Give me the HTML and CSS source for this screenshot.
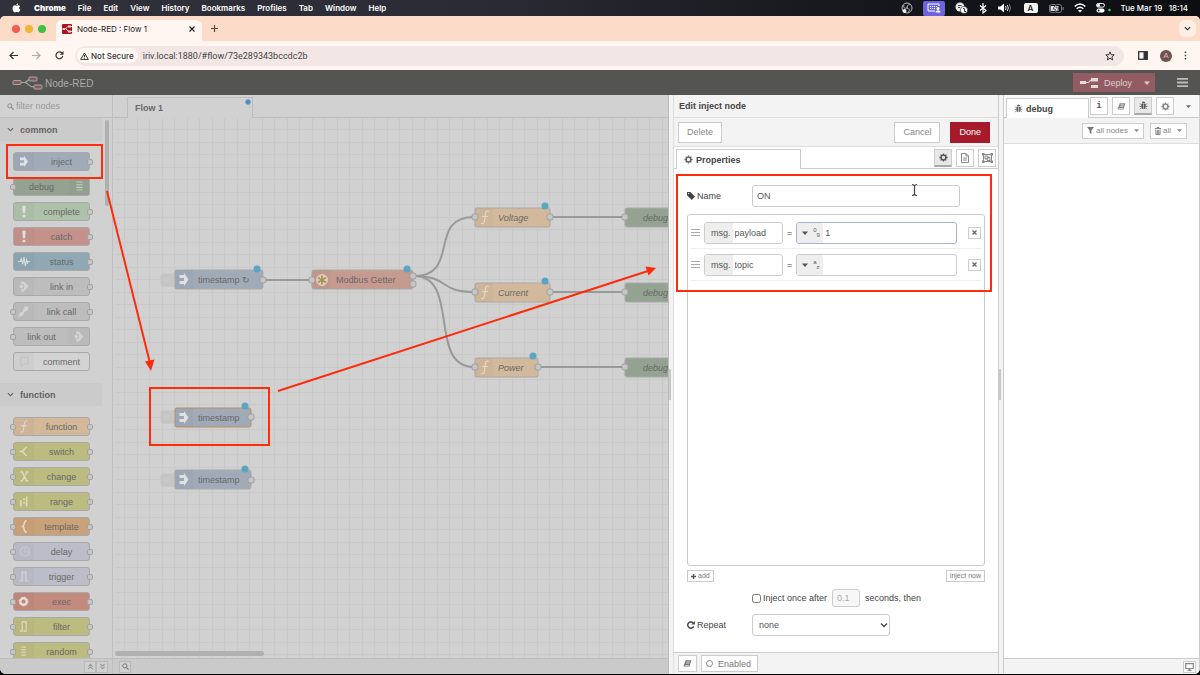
FILE: index.html
```html
<!DOCTYPE html>
<html lang="en">
<head>
<meta charset="utf-8">
<title>Node-RED : Flow 1</title>
<link rel="stylesheet" href="styles.css">
</head>
<body>
<svg class="defs" aria-hidden="true">
  <symbol id="i-gear" viewBox="0 0 16 16"><circle cx="8" cy="8" r="4.2" fill="none" stroke="currentColor" stroke-width="2.6"/><path d="M8 .8v3M8 12.200v3M.8 8h3M12.200 8h3M2.900 2.900l2.100 2.100M11 11l2.100 2.100M2.900 13.100L5 11M11 5l2.100-2.100" stroke="currentColor" stroke-width="2.400"/></symbol>
  <symbol id="i-bug" viewBox="0 0 16 16"><path d="M5 4a3 3 0 0 1 6 0zM4.500 5h3v9.500C5 14 4 12 4 9.500zM8.500 5h3l.5 4.500c0 2.500-1 4.500-3.500 5z" fill="currentColor"/><path d="M4.500 7L2 4.500M4 9.500H1M4.500 12L2 14.500M11.500 7L14 4.500M12 9.500h3M11.500 12l2.500 2.500" stroke="currentColor" stroke-width="1.500"/></symbol>
  <symbol id="i-book" viewBox="0 0 16 16"><path d="M5 2h10l-3.500 11.500H3c-2 0-2-1.500-1.500-3z" fill="currentColor"/><path d="M6.500 5h5.500M5.700 7.500h5.500M3 11.500h7.500" stroke="#fff" stroke-width="1.100"/></symbol>
  <symbol id="i-search" viewBox="0 0 16 16"><circle cx="6.500" cy="6.500" r="4.700" fill="none" stroke="currentColor" stroke-width="2.200"/><path d="M10 10l5 5" stroke="currentColor" stroke-width="2.600"/></symbol>
  <symbol id="i-caret" viewBox="0 0 8 8"><path d="M0 2h8L4 6.500z" fill="currentColor"/></symbol>
  <symbol id="i-chev" viewBox="0 0 8 8"><path d="M1 2.500l3 3 3-3" fill="none" stroke="currentColor" stroke-width="1.300"/></symbol>
  <symbol id="i-bars" viewBox="0 0 12 12"><path d="M0 2h12M0 6h12M0 10h12" stroke="currentColor" stroke-width="2"/></symbol>
  <symbol id="i-lines" viewBox="0 0 9 9"><path d="M0 1.500h9M0 4.500h9M0 7.500h9" stroke="currentColor"/></symbol>
  <symbol id="n-arrow" viewBox="0 0 20 19"><path d="M5.500 5H10V3l4.500 6.500L10 16v-2H5.500v-3H10V8H5.500z" fill="#dfe1e4"/></symbol>
  <symbol id="n-list" viewBox="0 0 20 19"><path d="M7 4.500h7M7 7.500h7M7 10.500h7M7 13.500h7" stroke="#c3ccc1" stroke-width="1.200"/></symbol>
  <symbol id="n-bang" viewBox="0 0 20 19"><path d="M8 3h4l-.8 8.500H8.800zM8.500 13h3v3h-3z" fill="#dedede"/></symbol>
  <symbol id="n-pulse" viewBox="0 0 20 19"><path d="M3.500 9.500H6l1-3 1.500 6L10 4.500l1.500 10 1.300-7 1.200 3.500.8-1.500h2" fill="none" stroke="#d3dce0" stroke-width="1.300"/></symbol>
  <symbol id="n-link" viewBox="0 0 20 19"><path d="M7 4h3l5 5.500-5 5.500H7v-3h3V7H7z" fill="#d3d3d3"/><circle cx="7" cy="9.500" r="2" fill="#d3d3d3"/></symbol>
  <symbol id="n-call" viewBox="0 0 20 19"><path d="M11 3.500l4 1-1 4-3 1-3 5-4 1 1-4.500 3-1z" fill="#d4d4d4"/></symbol>
  <symbol id="n-comment" viewBox="0 0 20 19"><path d="M6 5h9v7h-5l-3 3v-3H6z" fill="none" stroke="#c0c0c0"/></symbol>
  <symbol id="n-fn" viewBox="0 0 20 19"><path d="M14 3.500c-2.500-1-3.300 0-3.600 2.500L9.500 13c-.3 2.500-1.500 3.200-3.500 2.300M7 8.500h6" fill="none" stroke="#e2d7c9" stroke-width="1.200"/></symbol>
  <symbol id="n-switch" viewBox="0 0 20 19"><path d="M5 9.500h3l5-5M8 9.500l5 5" fill="none" stroke="#deddbb" stroke-width="1.600"/></symbol>
  <symbol id="n-change" viewBox="0 0 20 19"><path d="M6 4.500h2l5 10h2M6 14.500h2l2-4M11.500 8l1.500-3.500h2" fill="none" stroke="#deddbb" stroke-width="1.500"/></symbol>
  <symbol id="n-range" viewBox="0 0 20 19"><path d="M6.500 8v7M13 4v11M10 6v2m0 2v2" stroke="#deddbb" stroke-width="1.800"/></symbol>
  <symbol id="n-brace" viewBox="0 0 20 19"><path d="M13 3c-4 0-1.500 5-4.500 6.500C11.500 11 9 16 13 16" fill="none" stroke="#e6d6c5" stroke-width="1.800"/></symbol>
  <symbol id="n-clock" viewBox="0 0 20 19"><circle cx="11" cy="9.500" r="5" fill="none" stroke="#cbcbd4" stroke-width="1.300"/><path d="M11 6v4h3" fill="none" stroke="#cbcbd4"/></symbol>
  <symbol id="n-trigger" viewBox="0 0 20 19"><path d="M5 14.500h3v-10h4v10h3" fill="none" stroke="#d1d1d9" stroke-width="1.400"/></symbol>
  <symbol id="n-cog" viewBox="0 0 20 19"><circle cx="9.500" cy="9.500" r="3.600" fill="none" stroke="#e8dad6" stroke-width="2.600"/><circle cx="9.500" cy="9.500" r="5" fill="none" stroke="#e8dad6" stroke-dasharray="2 1.900"/></symbol>
  <symbol id="n-filter" viewBox="0 0 20 19"><path d="M5.500 14.500H8v-10h4.500v10h-3" fill="none" stroke="#dfd3b5" stroke-width="1.500"/></symbol>
  <symbol id="n-random" viewBox="0 0 20 19"><path d="M7 4.500h5M7 7.500h5M7 10.500h5M7 13.500h5" fill="none" stroke="#dccfae" stroke-width="1.600"/></symbol>
</svg>

<div class="screen">
<header class="menubar">
  <svg class="apple" viewBox="0 0 16 18"><path d="M11 .5c.2 2-1.500 3.600-3.200 3.500C7.600 2.300 9.300.6 11 .5zM8 5c.8 0 1.800-.9 3.400-.8 1.200.1 2.300.6 3 1.600-2.600 1.700-2.200 5 .5 6.100C14 14.500 12.600 17 11 17c-1.200 0-1.600-.7-3-.7s-1.900.7-3 .7C2.800 17 .5 12.500.8 9 1 6 2.900 4.300 5 4.200 6.300 4.200 7.300 5 8 5z" fill="#fff"/></svg>
  <nav class="menus"><b>Chrome</b><span>File</span><span>Edit</span><span>View</span><span>History</span><span>Bookmarks</span><span>Profiles</span><span>Tab</span><span>Window</span><span>Help</span></nav>
  <div class="status">
    <svg width="12" height="12" viewBox="0 0 12 12"><circle cx="6" cy="6" r="5" fill="none" stroke="#bbb"/><path d="M6 6c0-3 2-4 3-3M6 6c3 1 3 3 1 4M6 6C3 7 2 5 3 3" stroke="#bbb" fill="none"/><circle cx="3.500" cy="9" r="2" fill="#eee"/></svg>
    <span class="share"><svg width="14" height="10" viewBox="0 0 14 10"><path d="M12 3V1H1v7h7" fill="none" stroke="#fff"/><path d="M3 3.500h7M3 5.500h5" stroke="#fff" stroke-dasharray="1 1"/><circle cx="11" cy="5.500" r="1.500" fill="#fff"/><path d="M8.500 9.500c0-3 5-3 5 0z" fill="#fff"/></svg></span>
    <svg width="13" height="12" viewBox="0 0 13 12"><circle cx="5" cy="5" r="4.500" fill="#e8e8e8"/><circle cx="9" cy="8" r="3.600" fill="#fff" stroke="#222" stroke-width=".6"/><path d="M3 3.500h3.500M3 5.500h2M8 6.500h1.500v3h1.500" stroke="#444" fill="none"/></svg>
    <svg width="10" height="12" viewBox="0 0 10 12"><path d="M2 3.500l6 5L5 11V1M8 3.500l-6 5" fill="none" stroke="#fff" stroke-width="1.200"/></svg>
    <svg width="15" height="10" viewBox="0 0 15 10"><path d="M0 3.500h2.500L6 .5v9l-3.500-3H0z" fill="#fff"/><path d="M7.500 3q1.200 2 0 4M9.300 2q2 3 0 6" stroke="#ddd" fill="none"/><path d="M11.200 1q2.600 4 0 8" stroke="#777" fill="none"/></svg>
    <span class="lang">A</span>
    <svg width="15" height="9" viewBox="0 0 15 9"><rect x=".5" y=".5" width="12" height="8" rx="2" fill="none" stroke="#777"/><rect x="1.500" y="2" width="8" height="5" fill="#ddd"/><path d="M7 0L4 5h2.500L6 9l4-5H7z" fill="#fff" stroke="#222" stroke-width=".7"/><path d="M14 3v3" stroke="#888"/></svg>
    <svg width="12" height="10" viewBox="0 0 12 10"><path d="M.7 3.500q5.300-5 10.600 0M2.700 5.700q3.300-3 6.600 0" fill="none" stroke="#fff" stroke-width="1.500"/><path d="M4 7.500q2-1.600 4 0L6 9.500z" fill="#fff"/></svg>
    <svg width="15" height="10" viewBox="0 0 15 10"><rect x=".5" y=".5" width="8" height="3.600" rx="1.800" fill="none" stroke="#fff"/><circle cx="2.500" cy="2.300" r="1.500" fill="#fff"/><rect x=".5" y="5.500" width="8" height="4" rx="2" fill="#fff"/><circle cx="2.600" cy="7.500" r="1" fill="#222"/><circle cx="13.500" cy="7" r="1.300" fill="#3fcf4a"/></svg>
    <time>Tue Mar 19&nbsp;&nbsp; 18:14</time>
  </div>
</header>

<div class="window">
<div class="tabstrip">
  <div class="lights"><i class="red"></i><i class="yellow"></i><i class="green"></i></div>
  <div class="browser-tab">
    <svg width="10" height="10" viewBox="0 0 10 10"><rect width="10" height="10" rx="1" fill="#a8141f"/><path d="M0 5h2c3 0 2-2.500 5-2.500h3M3 4.500c2 0 2 3 4 3h3" fill="none" stroke="#f1d5d5"/><path d="M1 4h2v2H1zM6 1.500h3v2H6zM6 6.500h3v2H6z" fill="#f1d5d5"/></svg>
    <span class="tab-title">Node-RED : Flow 1</span>
    <button class="plain" aria-label="Close tab"><svg width="6" height="6" viewBox="0 0 6 6"><path d="M.5.5l5 5M5.500.5l-5 5" stroke="#222" stroke-width="1.200"/></svg></button>
  </div>
  <button class="plain newtab" aria-label="New tab"><svg width="7" height="7" viewBox="0 0 7 7"><path d="M3.500 0v7M0 3.500h7" stroke="#5b4a42" stroke-width="1.200"/></svg></button>
  <button class="plain tabsearch" aria-label="Search tabs"><svg width="7" height="7"><use href="#i-chev"/></svg></button>
</div>
<div class="addressbar">
  <button class="plain" aria-label="Back"><svg width="9" height="9" viewBox="0 0 9 9"><path d="M9 4.500H1M4.500 1L1 4.500 4.500 8" fill="none" stroke="#333" stroke-width="1.200"/></svg></button>
  <button class="plain" aria-label="Forward"><svg width="9" height="9" viewBox="0 0 9 9"><path d="M0 4.500h8M4.500 1L8 4.500 4.500 8" fill="none" stroke="#b3aaa7" stroke-width="1.200"/></svg></button>
  <button class="plain" aria-label="Reload"><svg width="9" height="9" viewBox="0 0 9 9"><path d="M7.700 5A3.400 3.400 0 1 1 7 2.200" fill="none" stroke="#333" stroke-width="1.200"/><path d="M8.500 0v3.700H4.800z" fill="#333"/></svg></button>
  <div class="omnibox">
    <span class="chip"><svg width="9" height="8" viewBox="0 0 9 8"><path d="M4.500 1L8.300 7.400H.7z" fill="none" stroke="#333"/><path d="M4.500 3v2M4.500 5.600v1" stroke="#333"/></svg>Not Secure</span>
    <input class="url" aria-label="Address" value="iriv.local:1880/#flow/73e289343bccdc2b">
    <svg width="10" height="10" viewBox="0 0 10 10"><path d="M5 .9l1.200 2.800 3 .2-2.300 2 .7 3L5 7.300 2.400 8.900l.7-3-2.300-2 3-.2z" fill="none" stroke="#333"/></svg>
  </div>
  <div class="browser-actions">
    <svg width="10" height="9" viewBox="0 0 10 9"><rect x=".7" y=".7" width="8.600" height="7.600" fill="none" stroke="#333" stroke-width="1.300"/><path d="M5.500 1h3.500v7H5.500z" fill="#333"/></svg>
    <span class="avatar">A</span>
    <svg width="3" height="9" viewBox="0 0 3 9"><path d="M.7.500h1.500v1.500H.7zM.7 3.800h1.500v1.500H.7zM.7 7h1.500v1.500H.7z" fill="#444"/></svg>
  </div>
</div>

<div class="appbar">
  <svg width="31" height="14" viewBox="0 0 31 14"><path d="M8 6.500h4c4 0 3-3.500 7-3.500M12 6.500c5 0 4 4.500 10 4.500" fill="none" stroke="#a7a7a7" stroke-width="1.200"/><g fill="#8a5a5a" stroke="#a7a7a7"><rect x="1" y="4.500" width="8" height="4" rx="1"/><rect x="17" y="1" width="8" height="4" rx="1"/><rect x="22" y="9" width="8" height="4" rx="1"/></g></svg>
  <span class="brand">Node-RED</span>
  <button class="deploy"><svg width="18" height="12" viewBox="0 0 18 12"><path d="M5 5.500h3c2 0 2-3 4-3" fill="none" stroke="#ddd" stroke-width="1.200"/><path d="M0 4h6v3H0zM11 1h7v3.500h-7zM11 8h7v3h-7z" fill="#e3dada"/></svg><span>Deploy</span><svg class="deploy-caret" width="6" height="6"><use href="#i-caret"/></svg></button>
  <button class="plain menu" aria-label="Menu"><svg width="11" height="11"><use href="#i-bars"/></svg></button>
</div>

<main class="main">
<aside class="palette">
  <label class="filter"><svg width="7" height="7"><use href="#i-search"/></svg><input placeholder="filter nodes" aria-label="Filter nodes"></label>
  <div class="palette-scroll">
    <div class="cats">
    <h3 class="cat"><svg width="7" height="7"><use href="#i-chev"/></svg>common</h3>
    <div class="nodes">
      <div class="node c-inject out"><svg><use href="#n-arrow"/></svg><span>inject</span></div>
      <div class="node c-debug in rev"><svg><use href="#n-list"/></svg><span>debug</span></div>
      <div class="node c-complete out"><svg><use href="#n-bang"/></svg><span>complete</span></div>
      <div class="node c-catch out"><svg><use href="#n-bang"/></svg><span>catch</span></div>
      <div class="node c-status out"><svg><use href="#n-pulse"/></svg><span>status</span></div>
      <div class="node c-link out"><svg><use href="#n-link"/></svg><span>link in</span></div>
      <div class="node c-link in out"><svg><use href="#n-call"/></svg><span>link call</span></div>
      <div class="node c-link in rev"><svg><use href="#n-link"/></svg><span>link out</span></div>
      <div class="node c-comment"><svg><use href="#n-comment"/></svg><span>comment</span></div>
    </div>
    <h3 class="cat"><svg width="7" height="7"><use href="#i-chev"/></svg>function</h3>
    <div class="nodes">
      <div class="node c-function in out"><svg><use href="#n-fn"/></svg><span>function</span></div>
      <div class="node c-olive in out"><svg><use href="#n-switch"/></svg><span>switch</span></div>
      <div class="node c-olive in out"><svg><use href="#n-change"/></svg><span>change</span></div>
      <div class="node c-olive in out"><svg><use href="#n-range"/></svg><span>range</span></div>
      <div class="node c-template in out"><svg><use href="#n-brace"/></svg><span>template</span></div>
      <div class="node c-delay in out"><svg><use href="#n-clock"/></svg><span>delay</span></div>
      <div class="node c-delay in out"><svg><use href="#n-trigger"/></svg><span>trigger</span></div>
      <div class="node c-exec in out"><svg><use href="#n-cog"/></svg><span>exec</span></div>
      <div class="node c-olive in out"><svg><use href="#n-filter"/></svg><span>filter</span></div>
      <div class="node c-olive in out"><svg><use href="#n-random"/></svg><span>random</span></div>
    </div>
    </div>
    <div class="vbar"></div>
  </div>
  <div class="dimfoot palette-foot">
    <button aria-label="Collapse all"><svg width="7" height="7" viewBox="0 0 8 8"><path d="M1.500 4L4 1.500 6.500 4M1.500 7L4 4.500 6.500 7" fill="none" stroke="#999" stroke-width="1.200"/></svg></button><button aria-label="Expand all"><svg width="7" height="7" viewBox="0 0 8 8"><path d="M1.500 1L4 3.500 6.500 1M1.500 4L4 6.500 6.500 4" fill="none" stroke="#999" stroke-width="1.200"/></svg></button>
  </div>
</aside>

<section class="editor">
  <div class="flowtabs"><div class="flowtab">Flow 1<i></i></div></div>
  <div class="canvas">
  <svg class="flow" aria-label="Flow 1">
    <defs>
      <pattern id="grid" width="25" height="25" patternUnits="userSpaceOnUse" x="124" y="129"><path d="M.5 0v25M13.500 0v25M0 .5h25M0 13.500h25" stroke="#c9c9c9" fill="none"/></pattern>
    </defs>
    <g transform="translate(-113 -118)">
      <rect x="115" y="118" width="1100" height="1000" fill="url(#grid)"/>
      <g class="wire"><path d="M263 280H312"/><path d="M414 276C461 276 427 217 474 217"/><path d="M414 276C450 276 438 292 474 292"/><path d="M414 276C461 276 427 367 474 367"/><path d="M550 217H625M550 292H625M538 367H625"/></g>
      <g class="gbtn"><rect x="161" y="274" width="14" height="12" rx="2"/><rect x="163" y="276" width="8" height="8" rx="1"/><rect x="161" y="411" width="14" height="12" rx="2"/><rect x="163" y="413" width="8" height="8" rx="1"/><rect x="161" y="474" width="14" height="12" rx="2"/><rect x="163" y="476" width="8" height="8" rx="1"/></g>
      <g class="gnode">
        <rect x="175" y="270" width="88" height="19" rx="2" fill="#a1abb8"/>
        <rect x="175" y="408" width="76" height="19" rx="2" fill="#a1abb8" class="selected"/>
        <rect x="175" y="470" width="76" height="19" rx="2" fill="#a1abb8"/>
        <rect x="312" y="270" width="101" height="19" rx="2" fill="#c79a90"/>
        <rect x="475" y="208" width="75" height="19" rx="2" fill="#d3b99b"/>
        <rect x="475" y="283" width="75" height="19" rx="2" fill="#d3b99b"/>
        <rect x="475" y="358" width="63" height="19" rx="2" fill="#d3b99b"/>
        <rect x="625" y="208" width="88" height="19" rx="2" fill="#94a391"/>
        <rect x="625" y="283" width="88" height="19" rx="2" fill="#94a391"/>
        <rect x="625" y="358" width="88" height="19" rx="2" fill="#94a391"/>
      </g>
      <g fill="#000" fill-opacity=".02"><rect x="175" y="270" width="18" height="19"/><rect x="175" y="408" width="18" height="19"/><rect x="175" y="470" width="18" height="19"/><rect x="312" y="270" width="19" height="19"/><rect x="475" y="208" width="18" height="19"/><rect x="475" y="283" width="18" height="19"/><rect x="475" y="358" width="18" height="19"/></g>
      <use href="#n-arrow" x="174" y="270" width="20" height="19"/><use href="#n-arrow" x="174" y="408" width="20" height="19"/><use href="#n-arrow" x="174" y="470" width="20" height="19"/>
      <use href="#n-fn" x="475" y="208" width="20" height="19"/><use href="#n-fn" x="475" y="283" width="20" height="19"/><use href="#n-fn" x="475" y="358" width="20" height="19"/>
      <circle cx="322" cy="280" r="5.500" fill="#d9ccb2" stroke="#dccfb4"/><path d="M322 275.500v9M318 277.700l8 4.600M326 277.700l-8 4.600" stroke="#a98a5e" stroke-width="1.500"/>
      <g class="port"><rect x="260" y="277" width="6" height="6" rx="2"/><rect x="309" y="277" width="6" height="6" rx="2"/><rect x="410" y="273" width="6" height="6" rx="2"/><rect x="410" y="281" width="6" height="6" rx="2"/><rect x="248" y="414" width="6" height="6" rx="2"/><rect x="248" y="477" width="6" height="6" rx="2"/><rect x="472" y="214" width="6" height="6" rx="2"/><rect x="547" y="214" width="6" height="6" rx="2"/><rect x="472" y="289" width="6" height="6" rx="2"/><rect x="547" y="289" width="6" height="6" rx="2"/><rect x="472" y="364" width="6" height="6" rx="2"/><rect x="535" y="364" width="6" height="6" rx="2"/><rect x="622" y="214" width="6" height="6" rx="2"/><rect x="622" y="289" width="6" height="6" rx="2"/><rect x="622" y="364" width="6" height="6" rx="2"/></g>
      <g fill="#5aa5c2"><circle cx="257" cy="269" r="3.500"/><circle cx="407" cy="269" r="3.500"/><circle cx="545" cy="206" r="3.500"/><circle cx="545" cy="281" r="3.500"/><circle cx="533" cy="356" r="3.500"/><circle cx="245" cy="406" r="3.500"/><circle cx="245" cy="469" r="3.500"/></g>
      <g class="glabel"><text x="198" y="283">timestamp ↻</text><text x="198" y="421">timestamp</text><text x="198" y="483">timestamp</text><text x="336" y="283">Modbus Getter</text><g font-style="italic"><text x="498" y="221">Voltage</text><text x="498" y="296">Current</text><text x="498" y="371">Power</text><text x="643" y="221">debug</text><text x="643" y="296">debug</text><text x="643" y="371">debug</text></g></g>
    </g>
  </svg>
  <div class="hbar"></div>
  </div>
  <div class="dimfoot editor-foot"><button aria-label="Search flows"><svg width="7" height="7"><use href="#i-search"/></svg></button></div>
</section>

<div class="grip tray-grip"><i></i></div>
<section class="tray">
  <h2 class="tray-title">Edit inject node</h2>
  <div class="tray-actions"><button class="btn">Delete</button><button class="btn push">Cancel</button><button class="btn primary">Done</button></div>
  <div class="tabs tray-tabs">
    <button class="tab"><svg width="9" height="9"><use href="#i-gear"/></svg>Properties</button>
    <div class="tab-tools">
      <button class="sq active" aria-label="Properties"><svg width="9" height="9"><use href="#i-gear"/></svg></button>
      <button class="sq" aria-label="Description"><svg width="8" height="10" viewBox="0 0 8 10"><path d="M.5.5h4.500l2.500 2.500v6.500h-7zM5 .5V3h2.500M2 5h4M2 7h4" fill="none" stroke="currentColor"/></svg></button>
      <button class="sq" aria-label="Appearance"><svg width="11" height="10" viewBox="0 0 11 10"><path d="M1.500 1.500h8v7h-8z M3 3h3v3H3z M5 4.500h3v3H5z" fill="none" stroke="currentColor"/><path d="M0 0h2.500v2.500H0zM8.500 0H11v2.500H8.500zM0 7.500h2.500V10H0zM8.500 7.500H11V10H8.500z" fill="currentColor"/></svg></button>
    </div>
  </div>
  <form class="form">
    <div class="row">
      <label class="lbl" for="name"><svg width="8" height="8" viewBox="0 0 8 8"><path d="M0 0h3.300L8 4.500 4.800 8 0 3.300z" fill="#444"/><circle cx="1.600" cy="1.600" r=".7" fill="#fff"/></svg>Name</label>
      <input id="name" class="field grow" value="ON">
    </div>
    <div class="props">
      <div class="prop">
        <svg class="drag" width="9" height="9"><use href="#i-lines"/></svg>
        <label class="field typed key"><span class="type">msg.</span><input aria-label="Property" value="payload"></label><span>=</span>
        <label class="field typed val focus"><span class="type"><svg width="6" height="6"><use href="#i-caret"/></svg><small><sup>0</sup><sub>9</sub></small></span><input aria-label="Payload value" value="1"></label>
        <button type="button" class="remove" aria-label="Remove payload"><svg width="5" height="5" viewBox="0 0 5 5"><path d="M.5.5l4 4M4.500.5l-4 4" stroke="#666" stroke-width="1.300"/></svg></button>
      </div>
      <div class="prop">
        <svg class="drag" width="9" height="9"><use href="#i-lines"/></svg>
        <label class="field typed key"><span class="type">msg.</span><input aria-label="Property" value="topic"></label><span>=</span>
        <label class="field typed val"><span class="type"><svg width="6" height="6"><use href="#i-caret"/></svg><small><sup>a</sup><sub>z</sub></small></span><input aria-label="Topic value" value=""></label>
        <button type="button" class="remove" aria-label="Remove topic"><svg width="5" height="5" viewBox="0 0 5 5"><path d="M.5.5l4 4M4.500.5l-4 4" stroke="#666" stroke-width="1.300"/></svg></button>
      </div>
    </div>
    <div class="under"><button type="button" class="mini"><svg width="5" height="5" viewBox="0 0 5 5"><path d="M2.500 0v5M0 2.500h5" stroke="#555" stroke-width="1.400"/></svg>add</button><button type="button" class="mini">inject now</button></div>
    <div class="row once"><input type="checkbox" id="once"><label for="once">Inject once after</label><input class="field delay" aria-label="Delay in seconds" value="0.1" disabled><span>seconds, then</span></div>
    <div class="row repeat">
      <label class="lbl" for="repeat"><svg width="8" height="8" viewBox="0 0 9 9"><path d="M7.500 6A3.500 3.500 0 1 1 7 2.300" fill="none" stroke="#444" stroke-width="1.600"/><path d="M8.800 0v4H4.800z" fill="#444"/></svg>Repeat</label>
      <div class="select"><select id="repeat" class="field"><option>none</option></select><svg width="8" height="8"><use href="#i-chev"/></svg></div>
    </div>
  </form>
  <div class="tray-foot"><button class="btn small" aria-label="Help"><svg width="9" height="9"><use href="#i-book"/></svg></button><button class="btn small enabled"><i></i>Enabled</button></div>
</section>

<div class="grip side-grip"><i></i></div>
<aside class="sidebar">
  <div class="tabs side-tabs">
    <button class="tab"><svg width="9" height="9"><use href="#i-bug"/></svg>debug</button>
    <div class="tab-tools">
      <button class="sq info" aria-label="Information">i</button>
      <button class="sq" aria-label="Help"><svg width="9" height="9"><use href="#i-book"/></svg></button>
      <button class="sq active" aria-label="Debug"><svg width="9" height="9"><use href="#i-bug"/></svg></button>
      <button class="sq" aria-label="Configuration"><svg width="9" height="9"><use href="#i-gear"/></svg></button>
      <button class="plain more" aria-label="More"><svg width="5" height="5"><use href="#i-caret"/></svg></button>
    </div>
  </div>
  <div class="side-tools">
    <button class="btn tiny"><svg width="7" height="7" viewBox="0 0 8 8"><path d="M0 0h8L5 4v4L3 6.500V4z" fill="#777"/></svg>all nodes<svg class="tc" width="5" height="5"><use href="#i-caret"/></svg></button>
    <button class="btn tiny"><svg width="6" height="8" viewBox="0 0 6 8"><path d="M0 1.500h6M2 1V.5h2V1M.9 2.500v5h4.200v-5M2.300 3v4M3.700 3v4" fill="none" stroke="#777" stroke-width=".9"/></svg>all<svg class="tc" width="5" height="5"><use href="#i-caret"/></svg></button>
  </div>
  <div class="messages"></div>
  <div class="side-foot"><button class="mini" aria-label="Open in window"><svg width="9" height="8" viewBox="0 0 9 8"><path d="M.7.700h7.600v4.800H.7z" fill="none" stroke="#888" stroke-width="1.200"/><path d="M3.500 6h2v1h1v1h-4V7h1z" fill="#888"/></svg></button></div>
</aside>
</main>
</div>
</div>

<svg class="marks" aria-hidden="true">
  <g fill="none" stroke="#fc2c0c" stroke-width="2"><rect x="7" y="145" width="95" height="33"/><rect x="150" y="388" width="119" height="57"/><rect x="677" y="175" width="314" height="116"/><path d="M107 191L150 363M278 391L648 271"/></g>
  <path d="M151 371l-6-9.500 9.500-2zM656 268l-7.500 7.500-3-9z" fill="#fc2c0c"/>
  <path d="M912 184.500q2 0 2.500 1.500q.5-1.500 2.500-1.500M914.500 186v8M912 195.500q2 0 2.500-1.500q.5 1.500 2.500 1.500" fill="none" stroke="#444" stroke-width="1.200"/>
</svg>
</body>
</html>
```

FILE: styles.css
```css
*, *::before, *::after { box-sizing: border-box; }
body { margin: 0; background: #000; font: 9px/12px "Liberation Sans", Arial, sans-serif; color: #555; }
button, input, select { font: inherit; color: inherit; margin: 0; }
button { display: flex; align-items: center; justify-content: center; cursor: pointer; }
input { min-width: 0; }
svg { flex: none; }
.defs { display: none; }
.plain { border: 0; background: none; padding: 0; }
.marks { position: absolute; left: 0; top: 0; width: 100%; height: 100%; pointer-events: none; }

.screen { display: flex; flex-direction: column; height: 100vh; background: linear-gradient(90deg, #30313b 0, #2a2b34 40%, #17181d 70%, #0d0e11 100%) top / 100% 24px no-repeat #000; }

/* system menu bar */
.menubar { display: flex; align-items: center; height: 16px; padding: 0 12px; color: #fff; font: 600 8px/14px Inter, sans-serif; }
.apple { width: 9px; height: 10px; }
.menus { display: flex; gap: 12px; margin-left: 13px; }
.status { display: flex; align-items: center; gap: 10px; margin-left: auto; }
.status time { font-weight: 500; }
.share { display: flex; align-items: center; justify-content: center; width: 22px; height: 15px; background: #6c63e0; border-radius: 2px; }
.lang { width: 14px; margin: 0 1px; border-radius: 2px; background: #f2f2f2; color: #222; text-align: center; font-size: 8px; line-height: 10px; }

/* browser chrome */
.window { display: flex; flex-direction: column; flex: 1; min-height: 0; margin-bottom: 1px; border-radius: 5px 5px 6px 6px; overflow: hidden; background: #fcdcc8; }
.tabstrip { display: flex; align-items: stretch; height: 25px; padding-right: 4px; background: #fcdcc8; font: 8px/12px Inter, sans-serif; color: #222; }
.lights { display: flex; align-items: center; gap: 5px; padding: 0 12px; }
.lights i { width: 8px; height: 8px; border-radius: 50%; }
.red { background: #f75c50; }
.yellow { background: #f2b535; }
.green { background: #3ec142; }
.browser-tab { display: flex; align-items: center; gap: 5px; width: 146px; margin: 4px 0 0 -2px; padding: 0 7px 4px 6px; border-radius: 6px 6px 0 0; background: #fff5f1; }
.tab-title { flex: 1; }
.newtab { margin-left: 9px; }
.tabsearch { align-self: center; width: 17px; height: 17px; margin-left: auto; border-radius: 6px; background: #fdeee6; }
.addressbar { display: flex; align-items: center; gap: 14px; height: 29px; padding: 0 13px 0 9px; background: #fff5f1; }
.omnibox { display: flex; align-items: center; flex: 1; gap: 5px; height: 20px; margin-left: -3px; padding: 0 9px 0 2px; border-radius: 10px; background: #f3e7e5; }
.chip { display: flex; align-items: center; gap: 2px; height: 15px; padding: 0 4px 0 3px; border-radius: 8px; background: #fff8f5; color: #333; font: 500 8px/12px Inter, sans-serif; }
.url { flex: 1; border: 0; padding: 0; background: none; color: #444; font: 9px/12px Roboto, sans-serif; }
.browser-actions { display: flex; align-items: center; gap: 12px; }
.avatar { width: 12px; height: 12px; border-radius: 50%; background: #6d5350; color: #e9b9b0; text-align: center; font-size: 8px; }

/* editor header */
.appbar { display: flex; align-items: center; height: 25px; padding: 0 12px; background: #545452; color: #aaa; }
.brand { margin: 3px auto 0 2px; font-size: 10px; }
.deploy { height: 19px; padding: 0 5px 0 7px; gap: 6px; border: 0; background: #925c62; color: #ddcdcd; }
.deploy-caret { margin-left: 6px; }
.menu { margin-left: 22px; color: #bbb; }

.main { display: flex; flex: 1; min-height: 0; }

/* palette */
.palette { display: flex; flex-direction: column; width: 113px; background: #d1d1d1; border-right: 1px solid #bfbfbf; }
.filter { display: flex; align-items: center; gap: 2px; height: 23px; padding: 0 7px; border-bottom: 1px solid #bdbdbd; background: #d2d2d2; color: #888; }
.filter input { flex: 1; border: 0; padding: 0; background: none; }
.filter input::placeholder { color: #999; }
.palette-scroll { display: flex; flex: 1; min-height: 0; overflow: hidden; }
.cats { flex: 1; }
.vbar { width: 4px; height: 86px; margin: 2px 3px; border-radius: 2px; background: #b0b0b0; }
.cat { display: flex; align-items: center; gap: 6px; height: 23px; margin: 0; padding-left: 7px; background: #cbcbcb; color: #636363; font-size: 9px; }
.nodes { display: flex; flex-direction: column; gap: 6px; padding: 11px 12px 12px 13px; }
.node { position: relative; display: flex; align-items: center; height: 19px; border: 1px solid #a9a9a9; border-radius: 3px; color: #686868; }
.node svg { width: 20px; height: 17px; background: #00000005; }
.node span { flex: 1; text-align: center; }
.rev { flex-direction: row-reverse; }
.in::before, .out::after { content: ""; position: absolute; top: 6px; width: 6px; height: 6px; border: 1px solid #a3a3a3; border-radius: 2px; background: #c6c6c6; }
.in::before { left: -4px; }
.out::after { right: -4px; }
.c-inject { background: #a1abb8; }
.c-debug { background: #94a391; }
.c-complete { background: #aec2a9; }
.c-catch { background: #c4928a; }
.c-status { background: #8fa8b3; }
.c-link { background: #bdbdbd; }
.c-comment { background: #d3d3d3; }
.c-function { background: #d3b899; }
.c-olive { background: #bcbb80; }
.c-template { background: #caa27a; }
.c-delay { background: #bdbdca; }
.c-exec { background: #c38a7e; }
.dimfoot { display: flex; align-items: center; height: 16px; border-top: 1px solid #bdbdbd; background: #cacaca; }
.dimfoot button { width: 12px; height: 12px; padding: 0; border: 1px solid #b9b9b9; background: #d0d0d0; color: #777; }
.palette-foot { justify-content: flex-end; padding-right: 4px; }
.editor-foot { padding-left: 6px; }

/* flow editor */
.editor { display: flex; flex-direction: column; flex: 1; min-width: 0; background: #d1d1d1; }
.flowtabs { display: flex; align-items: flex-end; height: 23px; padding-left: 14px; border-bottom: 1px solid #bdbdbd; }
.flowtab { position: relative; width: 126px; height: 21px; margin-bottom: -1px; padding: 4px 7px; border: 1px solid #bdbdbd; border-bottom: 0; background: #d1d1d1; color: #6a6a6a; font-weight: bold; }
.flowtab i { position: absolute; top: 1px; right: 1px; width: 6px; height: 6px; border-radius: 50%; border: 1px solid #8aa8c8; background: #4a86c4; }
.canvas { position: relative; flex: 1; min-height: 0; overflow: hidden; }
.flow { display: block; width: 100%; height: 100%; }
.hbar { position: absolute; left: 2px; bottom: 2px; width: 149px; height: 5px; border-radius: 3px; background: #b1b1b1; }
.wire { fill: none; stroke: #999; stroke-width: 2; }
.gnode rect { stroke: #a9a9a9; }
.gnode .selected { stroke: #b98d68; }
.gbtn rect { fill: #c8c8c8; stroke: #c0c0c0; }
.port rect { fill: #c6c6c6; stroke: #9f9f9f; }
.glabel { fill: #686868; font-size: 9px; }

/* split handles */
.grip { display: flex; align-items: center; background: #f3f3f3; }
.grip i { width: 2px; height: 31px; background: #c8c8c8; }
.tray-grip { width: 6px; border-left: 1px solid #bbb; border-right: 1px solid #ddd; }
.side-grip { width: 5px; border-left: 1px solid #ccc; }

/* shared controls */
.btn { height: 21px; padding: 0 8px; border: 1px solid #ccc; background: #fff; color: #888; }
.primary { border-color: #a71a2b; background: #a71a2b; color: #fff; }
.small { height: 17px; padding: 0 4px; gap: 5px; color: #777; }
.tiny { height: 16px; padding: 0 4px; gap: 2px; color: #888; font-size: 8px; }
.tc { margin-left: 4px; }
.mini { height: 12px; padding: 0 3px; gap: 2px; border: 1px solid #ccc; background: #fff; color: #777; font-size: 7px; }
.tabs { display: flex; align-items: flex-end; border-bottom: 1px solid #ccc; }
.tab { gap: 3px; height: 20px; margin-bottom: -1px; padding: 0 7px; justify-content: flex-start; border: 1px solid #ccc; border-bottom: 0; background: #fff; color: #444; font-weight: bold; }
.tab svg { color: #666; }
.tab-tools { display: flex; align-items: center; align-self: center; gap: 4px; margin-left: auto; }
.sq { width: 18px; height: 18px; padding: 0; border: 1px solid #ccc; background: #fff; color: #888; }
.sq.active { background: #e8e8e8; border-bottom: 2px solid #aaa; color: #555; }
.info { font: bold 9px/12px "Liberation Mono", monospace; color: #555; }
.field { height: 22px; padding: 0 4px; border: 1px solid #ccc; border-radius: 3px; background: #fff; color: #555; }

/* edit tray */
.tray { display: flex; flex-direction: column; width: 27%; background: #fff; }
.tray-title { height: 23px; margin: 0; padding: 5px; border-bottom: 1px solid #ddd; background: #f3f3f3; color: #444; font-size: 9px; }
.tray-actions { display: flex; align-items: center; gap: 10px; height: 29px; padding: 0 8px 0 4px; border-bottom: 1px solid #ddd; background: #f3f3f3; }
.push { margin-left: auto; }
.tray-tabs { height: 22px; padding: 0 2px; }
.tray-tabs .tab { width: 125px; }
.form { display: flex; flex-direction: column; flex: 1; min-height: 0; padding: 16px 13px 16px; color: #444; }
.row { display: flex; align-items: center; }
.lbl { display: flex; align-items: center; gap: 2px; width: 65px; }
.grow { flex: 1; margin-right: 25px; }
.props { flex: 1; margin-top: 7px; padding: 2px 3px; border: 1px solid #ccc; border-radius: 3px; }
.prop { display: flex; align-items: center; gap: 4px; height: 32px; border-bottom: 1px solid #eee; }
.drag { color: #aaa; }
.typed { display: flex; align-items: center; gap: 2px; padding: 0; overflow: hidden; }
.typed input { flex: 1; width: 0; border: 0; padding: 0; background: none; outline: 0; }
.type { display: flex; align-items: center; gap: 5px; height: 100%; padding: 0 1px 0 5px; background: #eee; }
.key .type { padding: 0 2px 0 6px; }
.type small { display: flex; width: 9px; font-size: 6px; line-height: 6px; }
.type sup, .type sub { vertical-align: baseline; font-size: 6px; }
.type sup { padding-bottom: 5px; }
.type sub { padding-top: 5px; }
.key { width: 79px; }
.val { flex: 1; }
.focus { border-color: #9fb6d4; }
.remove { width: 13px; height: 12px; margin-left: 7px; padding: 0; border: 1px solid #ccc; background: #fff; }
.under { display: flex; justify-content: space-between; margin-top: 4px; }
.once { gap: 2px; margin-top: 7px; padding-left: 65px; }
.once input[type="checkbox"] { width: 9px; height: 9px; }
.delay { width: 28px; height: 18px; margin: 0 3px; background: #f7f7f7; color: #aaa; }
.repeat { margin-top: 7px; }
.select { position: relative; width: 138px; }
.select select { width: 100%; appearance: none; padding: 0 6px; }
.select svg { position: absolute; right: 2px; top: 7px; pointer-events: none; }
.tray-foot { display: flex; align-items: center; gap: 4px; height: 22px; padding-left: 4px; border-top: 1px solid #ccc; background: #f3f3f3; }
.enabled { padding: 0 6px 0 4px; }
.enabled i { width: 7px; height: 7px; border: 1px solid #888; border-radius: 50%; }

/* sidebar */
.sidebar { display: flex; flex-direction: column; width: 197px; border: solid #ccc; border-width: 0 1px; background: #fff; }
.side-tabs { height: 23px; padding: 0 0 0 2px; background: #f8f8f8; }
.side-tabs .tab { width: 83px; }
.more { width: 21px; height: 17px; color: #666; }
.side-tools { display: flex; align-items: center; justify-content: flex-end; gap: 6px; height: 26px; padding-right: 12px; border-bottom: 1px solid #ddd; background: #f3f3f3; }
.messages { flex: 1; }
.side-foot { display: flex; align-items: center; justify-content: flex-end; height: 16px; padding-right: 3px; border-top: 1px solid #ccc; background: #f3f3f3; }
.side-foot .mini { padding: 0 1px; }
```
